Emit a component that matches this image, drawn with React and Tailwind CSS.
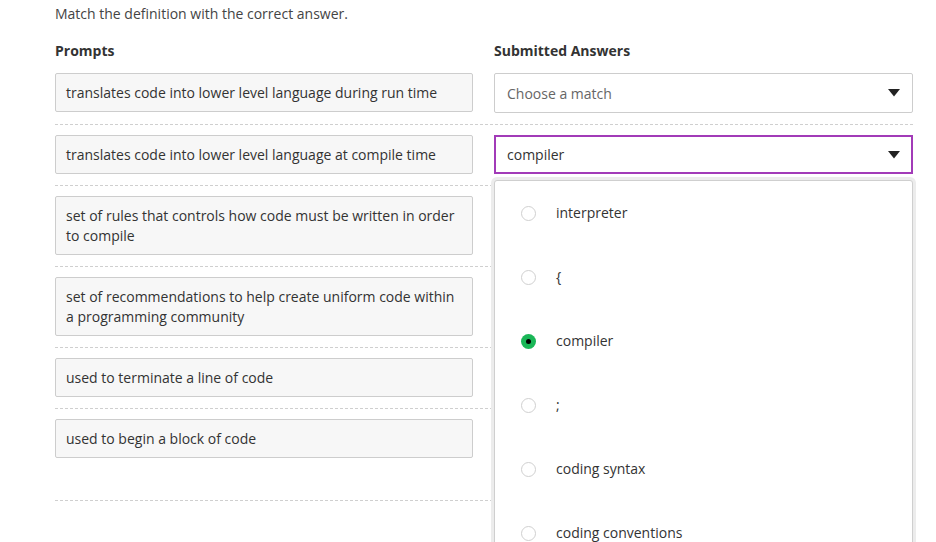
import React from "react";

const prompts = [
  "translates code into lower level language during run time",
  "translates code into lower level language at compile time",
  "set of rules that controls how code must be written in order to compile",
  "set of recommendations to help create uniform code within a programming community",
  "used to terminate a line of code",
  "used to begin a block of code",
];

const options = ["interpreter", "{", "compiler", ";", "coding syntax", "coding conventions"];

function Caret() {
  return (
    <svg width="12" height="8" viewBox="0 0 12 8" className="shrink-0">
      <path d="M0 0 L12 0 L6 7.5 Z" fill="#222" />
    </svg>
  );
}

function Radio({ checked }) {
  if (checked) {
    return (
      <span className="w-[15px] h-[15px] rounded-full bg-[#1ab657] flex items-center justify-center shrink-0">
        <span className="w-[5px] h-[5px] rounded-full bg-black" />
      </span>
    );
  }
  return <span className="w-[15px] h-[15px] rounded-full border border-[#d0d0d0] bg-white shrink-0" />;
}

export default function App() {
  return (
    <div
      className="relative bg-white text-[14px] text-[#333] pl-[55px] pt-[4px] h-[542px] overflow-hidden"
      style={{ fontFamily: '"Open Sans", "Noto Sans", sans-serif' }}
    >
      <p className="leading-[20px] text-[#444]">Match the definition with the correct answer.</p>
      <div className="grid grid-cols-[418px_419px] gap-x-[21px] mt-[17px] mb-[12px] font-bold leading-[20px]">
        <div>Prompts</div>
        <div>Submitted Answers</div>
      </div>
      <div className="w-[858px]">
        {prompts.map((p, i) => (
          <div
            key={i}
            className={`grid grid-cols-[418px_419px] gap-x-[21px] border-b border-dashed border-[#cfcfcf] ${
              i === 0 ? "pt-0" : "pt-[10px]"
            } ${i === prompts.length - 1 ? "pb-[42px]" : "pb-[11px]"}`}
          >
            <div className="self-start bg-[#f7f7f7] border border-[#cdcdcd] rounded-[2px] px-[10px] py-[8.5px] leading-[20px]">
              {p}
            </div>
            <div>
              {i === 0 && (
                <div className="h-[40px] border border-[#cdcdcd] rounded-[2px] bg-white flex items-center justify-between pl-[12px] pr-[12px]">
                  <span className="text-[#666]">Choose a match</span>
                  <Caret />
                </div>
              )}
              {i === 1 && (
                <div className="h-[39px] border-2 border-[#a23bb8] bg-white flex items-center justify-between pl-[11px] pr-[11px]">
                  <span className="text-[#333]">compiler</span>
                  <Caret />
                </div>
              )}
            </div>
          </div>
        ))}
      </div>
      <div className="absolute left-[494px] top-[180px] w-[419px] h-[420px] bg-white border border-[#cfcfcf] rounded-[3px] shadow-[0_0_0_3px_#ececec]">
        {options.map((o, i) => (
          <div key={i} className="h-[64px] flex items-center pl-[26px] gap-[20px]">
            <Radio checked={o === "compiler"} />
            <span className="leading-[20px]">{o}</span>
          </div>
        ))}
      </div>
    </div>
  );
}
